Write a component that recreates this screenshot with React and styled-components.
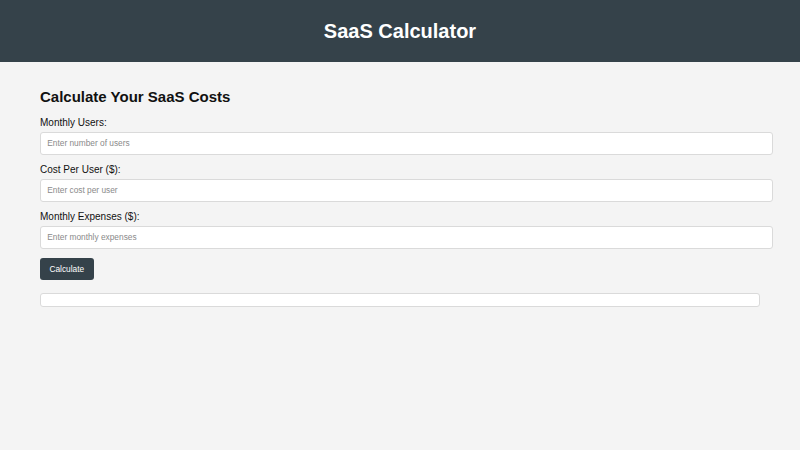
import React, { useState } from "react";
import styled, { createGlobalStyle } from "styled-components";

// --- Components --- //

const App = () => {
  const [users, setUsers] = useState("");
  const [cost, setCost] = useState("");
  const [expenses, setExpenses] = useState("");
  const [result, setResult] = useState("");

  const calculate = () => {
    const revenue = Number(users) * Number(cost);
    const profit = revenue - Number(expenses);
    if (!users || !cost) return;
    setResult(`Revenue: $${revenue.toFixed(2)} | Profit: $${profit.toFixed(2)}`);
  };

  return (
    <>
      <GlobalStyle />
      <StyledHeader>
        <h1>SaaS Calculator</h1>
      </StyledHeader>
      <StyledContainer>
        <h2>Calculate Your SaaS Costs</h2>
        <StyledLabel htmlFor="users">Monthly Users:</StyledLabel>
        <StyledInput
          id="users"
          type="number"
          placeholder="Enter number of users"
          value={users}
          onChange={(e) => setUsers(e.target.value)}
        />
        <StyledLabel htmlFor="cost">Cost Per User ($):</StyledLabel>
        <StyledInput
          id="cost"
          type="number"
          placeholder="Enter cost per user"
          value={cost}
          onChange={(e) => setCost(e.target.value)}
        />
        <StyledLabel htmlFor="expenses">Monthly Expenses ($):</StyledLabel>
        <StyledInput
          id="expenses"
          type="number"
          placeholder="Enter monthly expenses"
          value={expenses}
          onChange={(e) => setExpenses(e.target.value)}
        />
        <StyledButton onClick={calculate}>Calculate</StyledButton>
        <StyledResult>{result}</StyledResult>
      </StyledContainer>
    </>
  );
};

export default App;

// --- Styles --- //

const GlobalStyle = createGlobalStyle`
  body {
    margin: 0;
    background-color: #f4f4f4;
    font-family: "Liberation Sans", Arial, sans-serif;
    color: #111;
  }
`;

const StyledHeader = styled.header`
  background-color: #35424a;
  color: white;
  text-align: center;
  padding: 6.25px 0;
  h1 {
    font-size: 20px;
    margin: 13.4px 0;
  }
`;

const StyledContainer = styled.main`
  width: 90%;
  margin: 0 auto;
  padding: 12.5px 0;
  h2 {
    font-size: 15px;
    margin: 13px 0 12.45px;
  }
`;

const StyledLabel = styled.label`
  display: block;
  font-size: 10px;
  margin-bottom: 3.4px;
`;

const StyledInput = styled.input`
  display: block;
  box-sizing: border-box;
  width: calc(100% + 13px);
  height: 23.3px;
  padding: 0 6.25px;
  margin: 0 0 9.4px;
  font-family: inherit;
  font-size: 8.33px;
  border: 1px solid #dadada;
  border-radius: 3px;
  background: white;
  outline: none;
  &::placeholder {
    color: #8a8a8a;
  }
  &::-webkit-inner-spin-button,
  &::-webkit-outer-spin-button {
    -webkit-appearance: none;
  }
`;

const StyledButton = styled.button`
  display: block;
  background-color: #35424a;
  color: white;
  border: none;
  border-radius: 3px;
  padding: 6.25px 9.4px;
  font-family: inherit;
  font-size: 8.33px;
  line-height: 9.4px;
  cursor: pointer;
  :hover {
    background-color: #2a353c;
  }
`;

const StyledResult = styled.div`
  margin-top: 12.5px;
  min-height: 10px;
  padding: 1px 6.25px;
  background-color: white;
  border: 1px solid #dadada;
  border-radius: 3px;
  font-size: 10px;
`;
